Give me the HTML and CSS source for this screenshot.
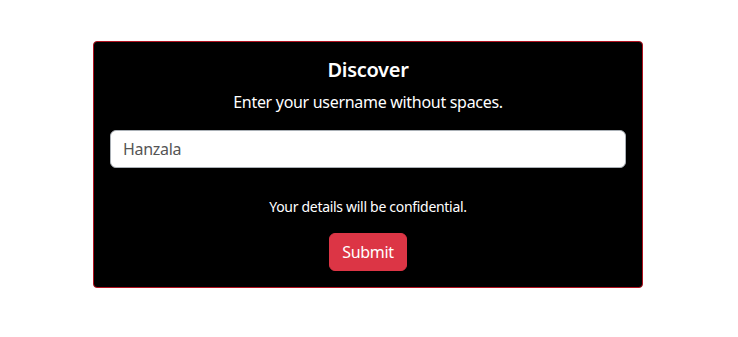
FILE: index.html
```html
<!DOCTYPE html>
<html lang="en">
<head>
    <meta charset="UTF-8">
    <meta name="viewport" content="width=device-width, initial-scale=1.0">
    <title>Discover</title>
    <link rel="stylesheet" href="styles.css">
</head>
<body>
    <div class="container">
        <div class="card">
            <h5 class="card-title">Discover</h5>
            <p class="card-text">Enter your username without spaces.</p>
            <form>
                <input type="text" id="username" class="form-control" value="Hanzala">
                <p class="note">Your details will be confidential.</p>
                <button type="submit" class="btn-submit">Submit</button>
            </form>
        </div>
    </div>
</body>
</html>
```

FILE: styles.css
```css
body {
    font-family: "Noto Sans", sans-serif;
    margin: 0;
    padding: 0;
    background: #fff;
    color: #212529;
}
.container {
    padding-top: 41px;
    padding-left: 93px;
}
.card {
    width: 550px;
    box-sizing: border-box;
    background: #000;
    border: 1px solid #b0121f;
    border-radius: 4px;
    padding: 16px;
    text-align: center;
    color: #fff;
    letter-spacing: -0.3px;
}
.card-title {
    font-size: 20px;
    font-weight: 600;
    line-height: 1.2;
    margin: 0 0 8px;
}
.card-text {
    font-size: 16px;
    line-height: 1.5;
    margin: 0 0 16px;
}
.form-control {
    display: block;
    width: 100%;
    box-sizing: border-box;
    height: 38px;
    padding: 6px 12px;
    font-family: inherit;
    font-size: 16px;
    letter-spacing: -0.3px;
    color: #555;
    background: #fff;
    border: 1px solid #aab0b6;
    border-radius: 6px;
}
.note {
    font-size: 14px;
    line-height: 21px;
    margin: 28px 0 16px;
}
.btn-submit {
    font-family: inherit;
    font-size: 16px;
    letter-spacing: -0.3px;
    line-height: 24px;
    padding: 6px 12px;
    color: #fff;
    background: #dc3545;
    border: 1px solid #dc3545;
    border-radius: 6px;
}
```
